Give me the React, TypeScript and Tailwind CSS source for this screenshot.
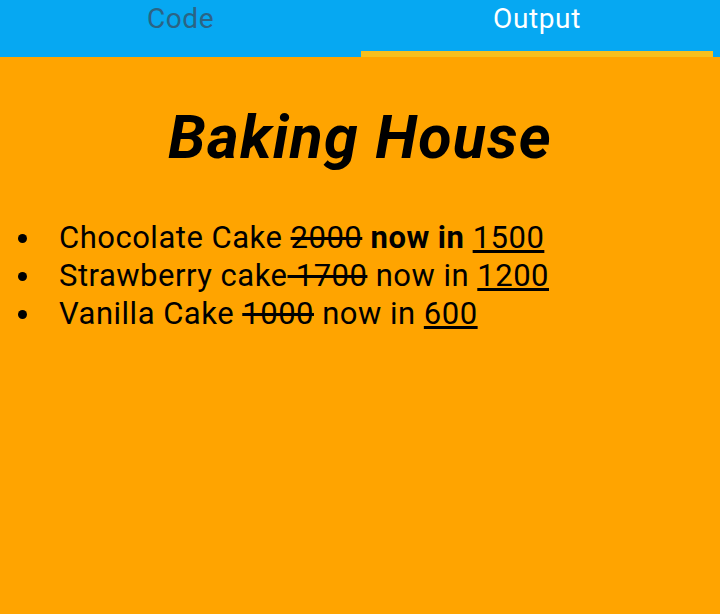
import React from 'react';

const cakes = [
  { name: 'Chocolate Cake ', old: '2000', boldNow: true, price: '1500' },
  { name: 'Strawberry cake', old: ' 1700', boldNow: false, price: '1200' },
  { name: 'Vanilla Cake ', old: '1000', boldNow: false, price: '600' },
];

export default function App() {
  return (
    <div className="w-[720px] h-[614px] bg-[#ffa400] font-['Roboto',sans-serif] text-black overflow-hidden">
      {/* tabs */}
      <div className="flex h-[57px] bg-[#06a8f2]">
        <div className="w-[361px] flex justify-center">
          <span className="text-[28px] leading-[38px] tracking-[0.6px] text-[#2b6485]">Code</span>
        </div>
        <div className="w-[352px] flex flex-col items-center">
          <span className="text-[28px] leading-[38px] tracking-[0.6px] text-white">Output</span>
          <div className="mt-auto w-full h-[6px] bg-[#f8bf1c]" />
        </div>
      </div>

      <h1 className="text-center text-[61px] font-bold italic leading-none mt-[50px] tracking-[1.2px]">
        Baking House
      </h1>

      <ul className="mt-[51px] text-[31px] leading-[38px] tracking-[0.5px]">
        {cakes.map((c) => (
          <li key={c.name} className="flex items-center">
            <span className="w-[59px] flex justify-center pr-[14px]">
              <span className="w-[9px] h-[9px] rounded-full bg-black" />
            </span>
            <span className="whitespace-pre">
              {c.name}
              <s>{c.old}</s>{' '}
              {c.boldNow ? <b>now in</b> : 'now in'} <u>{c.price}</u>
            </span>
          </li>
        ))}
      </ul>
    </div>
  );
}
